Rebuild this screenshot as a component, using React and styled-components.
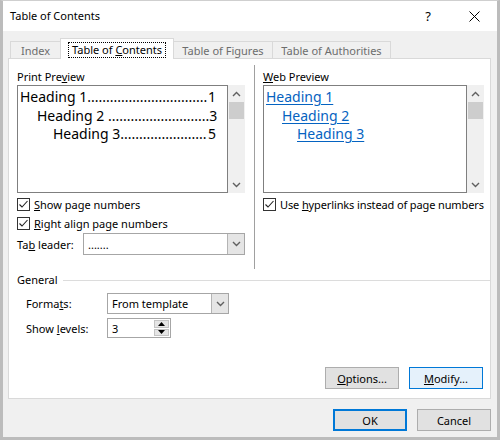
import React from "react";
import styled, { createGlobalStyle } from "styled-components";

const GlobalStyle = createGlobalStyle`
  * { box-sizing: border-box; }
  html, body { margin: 0; padding: 0; }
  body {
    font-family: "Noto Sans", "DejaVu Sans", sans-serif;
    font-size: 11px;
    color: #000;
    background: #fff;
  }
`;

const Window = styled.div`
  width: 500px;
  height: 440px;
  display: flex;
  flex-direction: column;
  background: #f0f0f0;
  border: 3px solid #bcbcbc;
  border-top: 1px solid #cfcfcf;
`;

const TitleBar = styled.div`
  height: 30px;
  flex: none;
  display: flex;
  align-items: center;
  background: #fff;
  padding-left: 7px;
`;

const Title = styled.div`
  flex: 1;
  line-height: 16px;
`;

const CaptionButton = styled.div`
  width: 46px;
  height: 30px;
  display: flex;
  align-items: center;
  justify-content: center;
  font-size: 13px;
`;

const Body = styled.div`
  flex: 1;
  display: flex;
  flex-direction: column;
  padding: 7px 6px 0 5px;
`;

const TabStrip = styled.div`
  height: 20px;
  display: flex;
  align-items: flex-end;
  padding-left: 2px;
`;

const Tab = styled.div`
  position: relative;
  z-index: ${p => (p.$active ? 1 : 0)};
  width: ${p => p.$w}px;
  height: ${p => (p.$active ? 21 : 17)}px;
  margin-bottom: ${p => (p.$active ? -1 : 0)}px;
  margin-left: ${p => (p.$first ? 0 : -1)}px;
  padding-top: ${p => (p.$active ? 2 : 0)}px;
  display: flex;
  align-items: center;
  justify-content: center;
  white-space: nowrap;
  border: 1px solid #d9d9d9;
  border-bottom: none;
  background: ${p => (p.$active ? "#fff" : "#f0f0f0")};
  color: ${p => (p.$active ? "#000" : "#6d6d6d")};
`;

const FocusRing = styled.span`
  border: 1px dotted #000;
  padding: 0 3px;
  line-height: 14px;
`;

const Panel = styled.div`
  height: 341px;
  flex: none;
  display: flex;
  flex-direction: column;
  background: #fff;
  border: 1px solid #d9d9d9;
  padding: 6px 6px 9px 8px;
`;

const Columns = styled.div`
  height: 204px;
  display: grid;
  grid-template-columns: 228px 1px 220px;
  column-gap: 9px;
  & > :nth-child(3) { margin-left: -1px; }
`;

const Column = styled.div`
  display: flex;
  flex-direction: column;
`;

const Divider = styled.div`
  background: #a0a0a0;
  width: 1px;
`;

const SectionLabel = styled.div`
  margin-top: 4px;
  line-height: 16px;
`;

const PreviewFrame = styled.div`
  height: 108px;
  display: flex;
`;

const PreviewBox = styled.div`
  flex: 1;
  min-width: 0;
  border: 1px solid #7f7f7f;
  padding: 2px 11px 0 2px;
  font-size: 14px;
  line-height: 18.5px;
  overflow: hidden;
`;

const ScrollBar = styled.div`
  width: 17px;
  display: flex;
  flex-direction: column;
  background: #f0f0f0;
`;

const ScrollArrow = styled.div`
  height: 17px;
  display: flex;
  align-items: center;
  justify-content: center;
`;

const ScrollThumb = styled.div`
  height: 17px;
  margin: 0 1px;
  background: #cdcdcd;
`;

const ScrollTrack = styled.div`
  flex: 1;
`;

const PrintLine = styled.div`
  display: flex;
  white-space: pre;
  padding-left: ${p => p.$indent}px;
`;

const PageNumber = styled.span`
  margin-left: auto;
`;

const WebLink = styled.div`
  padding-left: ${p => p.$indent}px;
  color: #0563c1;
  text-decoration: underline;
  text-underline-offset: 2px;
  white-space: nowrap;
`;

const CheckRow = styled.div`
  height: 16px;
  display: flex;
  align-items: center;
  gap: 4px;
  margin-top: ${p => p.$gap}px;
  white-space: nowrap;
  letter-spacing: ${p => (p.$tight ? "-0.12px" : "normal")};
`;

const CheckBox = styled.div`
  width: 13px;
  height: 13px;
  flex: none;
  border: 1px solid #333;
  background: #fff;
  display: flex;
  align-items: center;
  justify-content: center;
`;

const FieldRow = styled.div`
  display: flex;
  align-items: center;
  margin-top: ${p => p.$gap}px;
  padding-left: ${p => p.$inset || 0}px;
`;

const FieldLabel = styled.div`
  width: ${p => p.$w}px;
  flex: none;
  white-space: nowrap;
`;

const Combo = styled.div`
  width: ${p => p.$w}px;
  height: ${p => p.$h}px;
  display: flex;
  border: 1px solid #a6a6a6;
  background: #fff;
`;

const ComboText = styled.div`
  flex: 1;
  display: flex;
  align-items: center;
  padding-left: 4px;
`;

const ComboButton = styled.div`
  width: 17px;
  display: flex;
  align-items: center;
  justify-content: center;
  background: #e5e5e5;
  border-left: 1px solid #b4b4b4;
`;

const SpinButtons = styled.div`
  width: 16px;
  display: flex;
  flex-direction: column;
  padding: 1px 1px 1px 0;
  gap: 1px;
`;

const SpinHalf = styled.div`
  flex: 1;
  display: flex;
  align-items: center;
  justify-content: center;
  background: #e5e5e5;
  border: 1px solid #c4c4c4;
`;

const GroupHeader = styled.div`
  margin-top: 3px;
  display: flex;
  align-items: center;
  line-height: 16px;
`;

const GroupRule = styled.div`
  flex: 1;
  height: 1px;
  margin: 0 -6px 0 5px;
  background: #dcdcdc;
`;

const ButtonRow = styled.div`
  margin-top: auto;
  display: flex;
  justify-content: flex-end;
  gap: 10px;
  padding-right: 1px;
`;

const Button = styled.div`
  width: 74px;
  height: 22px;
  display: flex;
  align-items: center;
  justify-content: center;
  background: ${p => (p.$hover ? "#e5f1fb" : "#e1e1e1")};
  border: ${p => (p.$default ? 2 : 1)}px solid
    ${p => (p.$hover || p.$default ? "#0078d7" : "#adadad")};
`;

const Footer = styled.div`
  display: flex;
  justify-content: flex-end;
  gap: 10px;
  padding: 10px 0 0 0;
`;

const Key = styled.span`
  text-decoration: underline;
  text-underline-offset: 1px;
`;

const Chevron = ({ up, color = "#606060" }) => (
  <svg width="9" height="6" viewBox="0 0 9 6">
    <path
      d={up ? "M1 5 L4.5 1.5 L8 5" : "M1 1 L4.5 4.5 L8 1"}
      fill="none"
      stroke={color}
      strokeWidth="1.4"
    />
  </svg>
);

const Triangle = ({ up }) => (
  <svg width="7" height="4" viewBox="0 0 7 4">
    <path d={up ? "M0 4 L3.5 0 L7 4 Z" : "M0 0 L3.5 4 L7 0 Z"} fill="#000" />
  </svg>
);

const Tick = () => (
  <svg width="11" height="11" viewBox="0 0 11 11">
    <path d="M1.5 5.5 L4 8 L9.5 2" fill="none" stroke="#222" strokeWidth="1.1" />
  </svg>
);

const Scroller = () => (
  <ScrollBar>
    <ScrollArrow>
      <Chevron up />
    </ScrollArrow>
    <ScrollThumb />
    <ScrollTrack />
    <ScrollArrow>
      <Chevron />
    </ScrollArrow>
  </ScrollBar>
);

// leader dots counted to fill the preview line up to the page number
const printEntries = [
  { name: "Heading 1", dots: 32, page: "1", indent: 0 },
  { name: "Heading 2 ", dots: 27, page: "3", indent: 17 },
  { name: "Heading 3", dots: 23, page: "5", indent: 33 }
];

const webEntries = [
  { name: "Heading 1", indent: 0 },
  { name: "Heading 2", indent: 16 },
  { name: "Heading 3", indent: 31 }
];

const tabs = [
  { label: "Index", w: 51 },
  { label: "Table of Contents", w: 114, active: true },
  { label: "Table of Figures", w: 100 },
  { label: "Table of Authorities", w: 119 }
];

export default function App() {
  return (
    <>
      <GlobalStyle />
      <Window>
        <TitleBar>
          <Title>Table of Contents</Title>
          <CaptionButton>?</CaptionButton>
          <CaptionButton>
            <svg width="11" height="11" viewBox="0 0 11 11">
              <path d="M0.5 0.5 L10.5 10.5 M10.5 0.5 L0.5 10.5" stroke="#000" strokeWidth="1" />
            </svg>
          </CaptionButton>
        </TitleBar>
        <Body>
          <TabStrip>
            {tabs.map((t, i) => (
              <Tab key={t.label} $w={t.w} $active={t.active} $first={i === 0}>
                {t.active ? (
                  <FocusRing>
                    Table of <Key>C</Key>ontents
                  </FocusRing>
                ) : (
                  t.label
                )}
              </Tab>
            ))}
          </TabStrip>
          <Panel>
            <Columns>
              <Column>
                <SectionLabel>
                  Print Pre<Key>v</Key>iew
                </SectionLabel>
                <PreviewFrame>
                  <PreviewBox>
                    {printEntries.map(e => (
                      <PrintLine key={e.name} $indent={e.indent}>
                        {e.name + ".".repeat(e.dots)}
                        <PageNumber>{e.page}</PageNumber>
                      </PrintLine>
                    ))}
                  </PreviewBox>
                  <Scroller />
                </PreviewFrame>
                <CheckRow $gap={3}>
                  <CheckBox>
                    <Tick />
                  </CheckBox>
                  <span>
                    <Key>S</Key>how page numbers
                  </span>
                </CheckRow>
                <CheckRow $gap={3}>
                  <CheckBox>
                    <Tick />
                  </CheckBox>
                  <span>
                    <Key>R</Key>ight align page numbers
                  </span>
                </CheckRow>
                <FieldRow $gap={2}>
                  <FieldLabel $w={66}>
                    Ta<Key>b</Key> leader:
                  </FieldLabel>
                  <Combo $w={162} $h={22}>
                    <ComboText>.......</ComboText>
                    <ComboButton>
                      <Chevron />
                    </ComboButton>
                  </Combo>
                </FieldRow>
              </Column>
              <Divider />
              <Column>
                <SectionLabel>
                  <Key>W</Key>eb Preview
                </SectionLabel>
                <PreviewFrame>
                  <PreviewBox>
                    {webEntries.map(e => (
                      <WebLink key={e.name} $indent={e.indent}>
                        {e.name}
                      </WebLink>
                    ))}
                  </PreviewBox>
                  <Scroller />
                </PreviewFrame>
                <CheckRow $gap={3} $tight>
                  <CheckBox>
                    <Tick />
                  </CheckBox>
                  <span>
                    Use <Key>h</Key>yperlinks instead of page numbers
                  </span>
                </CheckRow>
              </Column>
            </Columns>
            <GroupHeader>
              <span>General</span>
              <GroupRule />
            </GroupHeader>
            <FieldRow $gap={5} $inset={9}>
              <FieldLabel $w={81}>
                Forma<Key>t</Key>s:
              </FieldLabel>
              <Combo $w={122} $h={21}>
                <ComboText>From template</ComboText>
                <ComboButton>
                  <Chevron />
                </ComboButton>
              </Combo>
            </FieldRow>
            <FieldRow $gap={4} $inset={9}>
              <FieldLabel $w={81}>
                Show <Key>l</Key>evels:
              </FieldLabel>
              <Combo $w={64} $h={20}>
                <ComboText>3</ComboText>
                <SpinButtons>
                  <SpinHalf>
                    <Triangle up />
                  </SpinHalf>
                  <SpinHalf>
                    <Triangle />
                  </SpinHalf>
                </SpinButtons>
              </Combo>
            </FieldRow>
            <ButtonRow>
              <Button>
                <span>
                  <Key>O</Key>ptions...
                </span>
              </Button>
              <Button $hover>
                <span>
                  <Key>M</Key>odify...
                </span>
              </Button>
            </ButtonRow>
          </Panel>
          <Footer>
            <Button $default>OK</Button>
            <Button>Cancel</Button>
          </Footer>
        </Body>
      </Window>
    </>
  );
}
